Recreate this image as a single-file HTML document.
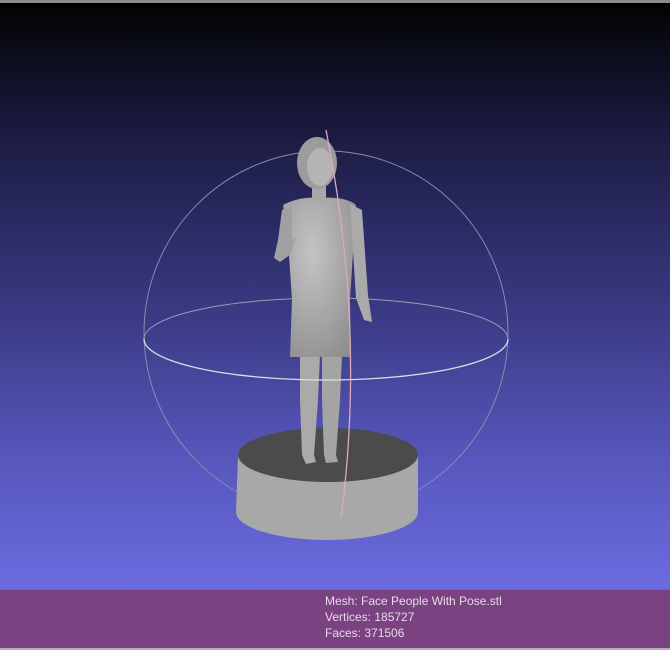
<!DOCTYPE html>
<html><head><style>
body{margin:0;width:670px;height:650px;overflow:hidden;background:#000}
.bg{position:absolute;left:0;top:0;width:670px;height:589px;background:linear-gradient(#000 0px,#05060c 20px,#1e1e48 150px,#38377f 300px,#5555b9 450px,#6b6ce0 589px)}
.top{position:absolute;left:0;top:0;width:670px;height:3px;background:#8a8a8a}
.bar{position:absolute;left:0;top:589px;width:670px;height:59px;background:#7b4282;border-top:1px solid #6e5fc0}
.bot{position:absolute;left:0;top:648px;width:670px;height:2px;background:#b8a8c0}
.txt{position:absolute;left:325px;top:593px;font:12px/16px "Liberation Sans",sans-serif;color:#e6dcea}
svg{position:absolute;left:0;top:0}
</style></head><body>
<div class="bg"></div><div class="top"></div>
<svg width="670" height="589">
<defs>
<radialGradient id="g" cx="0.4" cy="0.35" r="0.8"><stop offset="0" stop-color="#c4c4c4"/><stop offset="1" stop-color="#8c8c8c"/></radialGradient>
</defs>
<circle cx="326" cy="333" r="182" fill="none" stroke="#8a8ab0" stroke-width="1"/>
<path d="M144,339 A182,41 0 0 1 508,339" fill="none" stroke="#9a9ab8" stroke-width="1"/>
<path d="M238,455 L236,512 A91,28 0 0 0 418,512 L418,455 Z" fill="#a8a8a8"/>
<ellipse cx="328" cy="455" rx="90" ry="27" fill="#4b4b4b"/>
<path d="M300,355 L320,355 L318,400 L314,455 L316,462 L306,464 L302,455 L300,400 Z" fill="#aaaaaa"/>
<path d="M322,355 L342,355 L340,400 L336,455 L338,462 L326,463 L324,455 L322,400 Z" fill="#a4a4a4"/>
<path d="M283,205 Q300,196 320,198 Q345,196 356,205 L350,300 L351,357 L290,357 L292,300 L288,240 Z" fill="url(#g)"/>
<path d="M282,210 L292,206 L292,240 L296,238 L290,255 L280,262 L274,258 L278,240 Z" fill="#a0a0a0"/>
<path d="M350,204 L362,210 L368,295 L372,322 L364,320 L356,298 Z" fill="#aaaaaa"/>
<rect x="312" y="182" width="14" height="20" fill="#a8a8a8"/>
<ellipse cx="317" cy="163" rx="20" ry="26" fill="#9c9c9c"/>
<ellipse cx="320" cy="167" rx="13" ry="19" fill="#b4b4b4"/>
<path d="M144,339 A182,41 0 0 0 508,339" fill="none" stroke="#c8e8e0" stroke-width="1.3"/>
<path d="M326,130 Q366,330 341,518" fill="none" stroke="#e0a8c0" stroke-width="1.3"/>
</svg>
<div class="bar"></div><div class="bot"></div>
<div class="txt">Mesh: Face People With Pose.stl<br>Vertices: 185727<br>Faces: 371506</div>
</body></html>
